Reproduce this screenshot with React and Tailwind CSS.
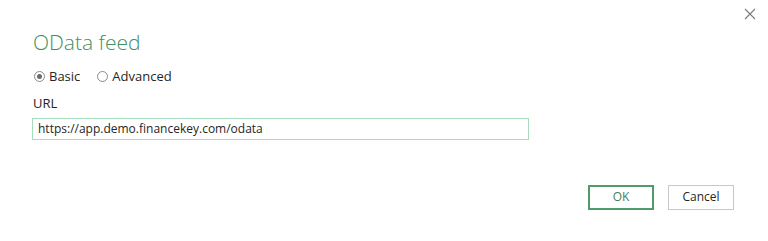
import React, { useState } from 'react';

const font = { fontFamily: '"Open Sans", "Noto Sans", sans-serif' };

const Radio = ({ checked, label, onClick }) => (
  <label className="flex items-center gap-[4px] cursor-pointer" onClick={onClick}>
    <span className="w-[11px] h-[11px] rounded-full border border-[#8a8a8a] flex items-center justify-center bg-white">
      {checked && <span className="w-[5px] h-[5px] rounded-full bg-[#6b6b6b]" />}
    </span>
    <span className="text-[13px] text-[#262626]">{label}</span>
  </label>
);

export default function App() {
  const [mode, setMode] = useState('basic');
  const [url, setUrl] = useState('https://app.demo.financekey.com/odata');

  return (
    <div className="w-[768px] h-[241px] bg-white relative" style={font}>
      {/* Close */}
      <button className="absolute left-[743px] top-[7px] w-[14px] h-[14px] flex items-center justify-center">
        <svg width="12" height="12" viewBox="0 0 12 12" stroke="#7a7a7a" strokeWidth="1.1">
          <path d="M1 1 L11 11 M11 1 L1 11" />
        </svg>
      </button>

      <div className="pt-[27px] pl-[33px] pr-[33px]">
        <h1 className="text-[21px] font-light text-[#3f8f5f] leading-[30px]">OData feed</h1>

        <div className="flex items-center gap-[17px] mt-[10px] ml-[1px]">
          <Radio checked={mode === 'basic'} label="Basic" onClick={() => setMode('basic')} />
          <Radio checked={mode === 'advanced'} label="Advanced" onClick={() => setMode('advanced')} />
        </div>

        <p className="text-[13px] text-[#262626] mt-[7px] leading-[18px]">URL</p>
        <input
          value={url}
          onChange={(e) => setUrl(e.target.value)}
          className="mt-[6px] -ml-[1px] w-[497px] h-[22px] border border-[#a9dcbf] px-[5px] text-[12px] text-[#262626] outline-none"
        />

        <div className="flex justify-end gap-[14px] mt-[45px] pr-0 mr-[1px]">
          <button className="w-[66px] h-[25px] border-2 border-[#4e9c6c] text-[12px] text-[#3f7f5a]">OK</button>
          <button className="w-[66px] h-[25px] border border-[#c8c8c8] text-[12px] text-[#262626]">Cancel</button>
        </div>
      </div>
    </div>
  );
}
